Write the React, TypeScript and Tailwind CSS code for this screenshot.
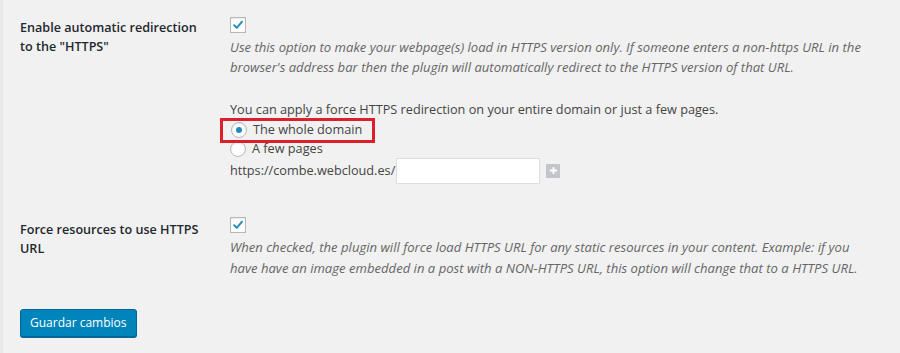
import React from 'react';

const Check = () => (
  <span className="flex h-4 w-4 items-center justify-center border border-[#b4b9be] bg-white shadow-[inset_0_1px_2px_rgba(0,0,0,0.1)]">
    <svg viewBox="0 0 16 16" className="h-[14px] w-[14px]">
      <path d="M3.5 8.2 L6.6 11.2 L12.6 4.2" fill="none" stroke="#1e8cbe" strokeWidth="2.2" strokeLinecap="round" strokeLinejoin="round" />
    </svg>
  </span>
);

const Radio = ({ checked }: { checked?: boolean }) => (
  <span className="flex h-4 w-4 items-center justify-center rounded-full border border-[#b4b9be] bg-white shadow-[inset_0_1px_2px_rgba(0,0,0,0.1)]">
    {checked && <span className="h-[6px] w-[6px] rounded-full bg-[#1e8cbe]" />}
  </span>
);

export default function App() {
  return (
    <div className="h-[353px] w-[900px] overflow-hidden border-l-[3px] border-[#e8e8e8] bg-[#f1f1f1] font-['Open_Sans','Noto_Sans',sans-serif] text-[13px] text-[#444]">
      <div className="flex pl-[17px] pt-[17px]">
        <div className="w-[210px] pt-[1px] text-[12.6px] font-semibold leading-[19px] text-[#23282d]">
          Enable automatic redirection
          <br />
          to the "HTTPS"
        </div>
        <div className="flex-1">
          <Check />
          <p className="mt-[4px] text-[13.1px] italic leading-[20px] text-[#666]">
            Use this option to make your webpage(s) load in HTTPS version only. If someone enters a non-https URL in the
            <br />
            browser's address bar then the plugin will automatically redirect to the HTTPS version of that URL.
          </p>
          <p className="mt-[22px] text-[12.7px] leading-[20px]">
            You can apply a force HTTPS redirection on your entire domain or just a few pages.
          </p>
          <div className="relative z-10 -ml-[10px] -mt-[2px] inline-flex h-[25px] items-center gap-[6px] border-[3px] border-[#dd1f2b] pl-[8px] pr-[10px]">
            <Radio checked />
            <span className="text-[12.7px]">The whole domain</span>
          </div>
          <div className="-mt-[3px] flex h-[18px] items-center gap-[6px]">
            <Radio />
            <span className="text-[12.7px]">A few pages</span>
          </div>
          <div className="mt-0 flex items-center">
            <span className="text-[12.7px]">https://combe.webcloud.es/</span>
            <span className="ml-[1px] h-[26px] w-[144px] border border-[#ddd] bg-white" />
            <span className="ml-[6px] flex h-[14px] w-[14px] items-center justify-center bg-[#c2c6cb]">
              <svg viewBox="0 0 10 10" className="h-[9px] w-[9px]">
                <path d="M5 1V9M1 5H9" stroke="#fff" strokeWidth="2" />
              </svg>
            </span>
          </div>
        </div>
      </div>

      <div className="mt-[33px] flex pl-[17px]">
        <div className="w-[210px] pt-[3px] text-[12.6px] font-semibold leading-[19px] text-[#23282d]">
          Force resources to use HTTPS
          <br />
          URL
        </div>
        <div className="flex-1">
          <Check />
          <p className="mt-[4px] text-[13.1px] italic leading-[21px] text-[#666]">
            When checked, the plugin will force load HTTPS URL for any static resources in your content. Example: if you
            <br />
            have have an image embedded in a post with a NON-HTTPS URL, this option will change that to a HTTPS URL.
          </p>
        </div>
      </div>

      <button className="ml-[17px] mt-[30px] h-[28px] rounded-[3px] border border-[#006799] bg-[#0085ba] px-[9px] text-[12px] text-white shadow-[0_1px_0_#006799]">
        Guardar cambios
      </button>
    </div>
  );
}
